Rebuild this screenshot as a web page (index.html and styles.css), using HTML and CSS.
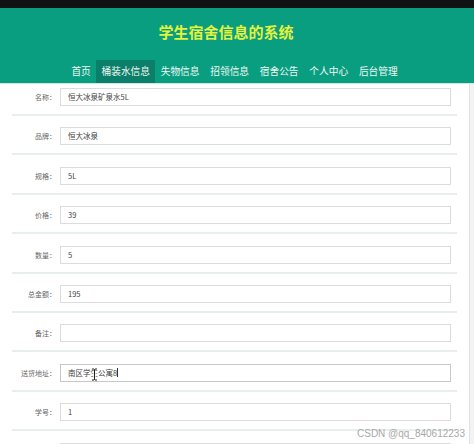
FILE: index.html
```html
<!DOCTYPE html>
<html lang="zh-CN">
<head>
<meta charset="utf-8">
<title>学生宿舍信息的系统</title>
<link rel="stylesheet" href="styles.css">
</head>
<body>
<div class="topbar"></div>
<header class="header">
  <div class="title">学生宿舍信息的系统</div>
  <nav class="nav">
    <a class="nav-item">首页</a>
    <a class="nav-item active">桶装水信息</a>
    <a class="nav-item">失物信息</a>
    <a class="nav-item">招领信息</a>
    <a class="nav-item">宿舍公告</a>
    <a class="nav-item">个人中心</a>
    <a class="nav-item">后台管理</a>
  </nav>
</header>
<div class="page">
  <main class="content">
    <div class="row"><label class="label">名称：</label><div class="field">恒大冰泉矿泉水5L</div></div>
    <div class="row"><label class="label">品牌：</label><div class="field">恒大冰泉</div></div>
    <div class="row"><label class="label">规格：</label><div class="field">5L</div></div>
    <div class="row"><label class="label">价格：</label><div class="field">39</div></div>
    <div class="row"><label class="label">数量：</label><div class="field">5</div></div>
    <div class="row"><label class="label">总金额：</label><div class="field">195</div></div>
    <div class="row"><label class="label">备注：</label><div class="field"></div></div>
    <div class="row"><label class="label">送货地址：</label><div class="field focused">南区学生公寓8<span class="caret"></span><svg class="ibeam" width="7" height="13" viewBox="0 0 7 13"><path d="M1 1h2l0.5 0.6L4 1h2M3.5 1.6v9.8M1 12h2l0.5-0.6L4 12h2" fill="none" stroke="#fff" stroke-width="2.2"/><path d="M1 1h2l0.5 0.6L4 1h2M3.5 1.6v9.8M1 12h2l0.5-0.6L4 12h2" fill="none" stroke="#222" stroke-width="1"/></svg></div></div>
    <div class="row"><label class="label">学号：</label><div class="field">1</div></div>
    <div class="row"><label class="label">&nbsp;</label><div class="field"></div></div>
  </main>
  <div class="rail"></div>
</div>
<div class="watermark">CSDN @qq_840612233</div>
</body>
</html>
```
FILE: styles.css
```css
html, body {
  margin: 0;
  padding: 0;
  height: 100%;
  overflow: hidden;
  background: #ffffff;
  font-family: "Noto Sans CJK SC", "Liberation Sans", sans-serif;
}

.topbar {
  height: 8px;
  background: #111213;
}

.header {
  background: #0a9e80;
  height: 76px;
  display: flex;
  flex-direction: column;
  border-bottom: 1px solid #cfe9e2;
  box-sizing: border-box;
}

.title {
  height: 52px;
  box-sizing: border-box;
  padding: 15px 22px 0 0;
  text-align: center;
  font-size: 15px;
  line-height: 18px;
  font-weight: bold;
  color: #e4f33a;
  letter-spacing: 0;
}

.nav {
  display: flex;
  justify-content: center;
  padding-right: 5px;
  height: 23px;
}

.nav-item {
  display: block;
  padding: 0 5.4px;
  font-size: 9.7px;
  line-height: 23px;
  color: #eef8f4;
  white-space: nowrap;
}

.nav-item.active {
  background: #0b7f69;
}

.page {
  display: flex;
  height: 360px;
}

.content {
  flex: 1;
  padding: 0 12px 0 12px;
}

.rail {
  width: 4px;
  border-left: 1px solid #e2e2e2;
  background: #f3f3f3;
}

.row {
  display: flex;
  align-items: center;
  padding: 11.4px 6px 8px 0;
  border-bottom: 2px solid #e7eeec;
}

.row:first-child {
  padding-top: 4px;
}

.label {
  width: 44px;
  flex: none;
  text-align: right;
  font-size: 7px;
  line-height: 10px;
  color: #666;
  margin-right: 4px;
  white-space: nowrap;
}

.field {
  position: relative;
  flex: 1;
  height: 18px;
  box-sizing: border-box;
  border: 1px solid #dcdcdc;
  padding-left: 7px;
  font-size: 7.5px;
  line-height: 16px;
  color: #444;
  white-space: nowrap;
}

.field.focused {
  border-color: #c8c8c8;
}

.caret {
  display: inline-block;
  width: 1px;
  height: 9px;
  background: #333;
  vertical-align: -1px;
}

.ibeam {
  position: absolute;
  left: 30px;
  top: 3px;
}

.watermark {
  position: absolute;
  right: 9px;
  bottom: 5px;
  font-family: "Liberation Sans", sans-serif;
  font-size: 10px;
  color: #a9a9a9;
}
```
